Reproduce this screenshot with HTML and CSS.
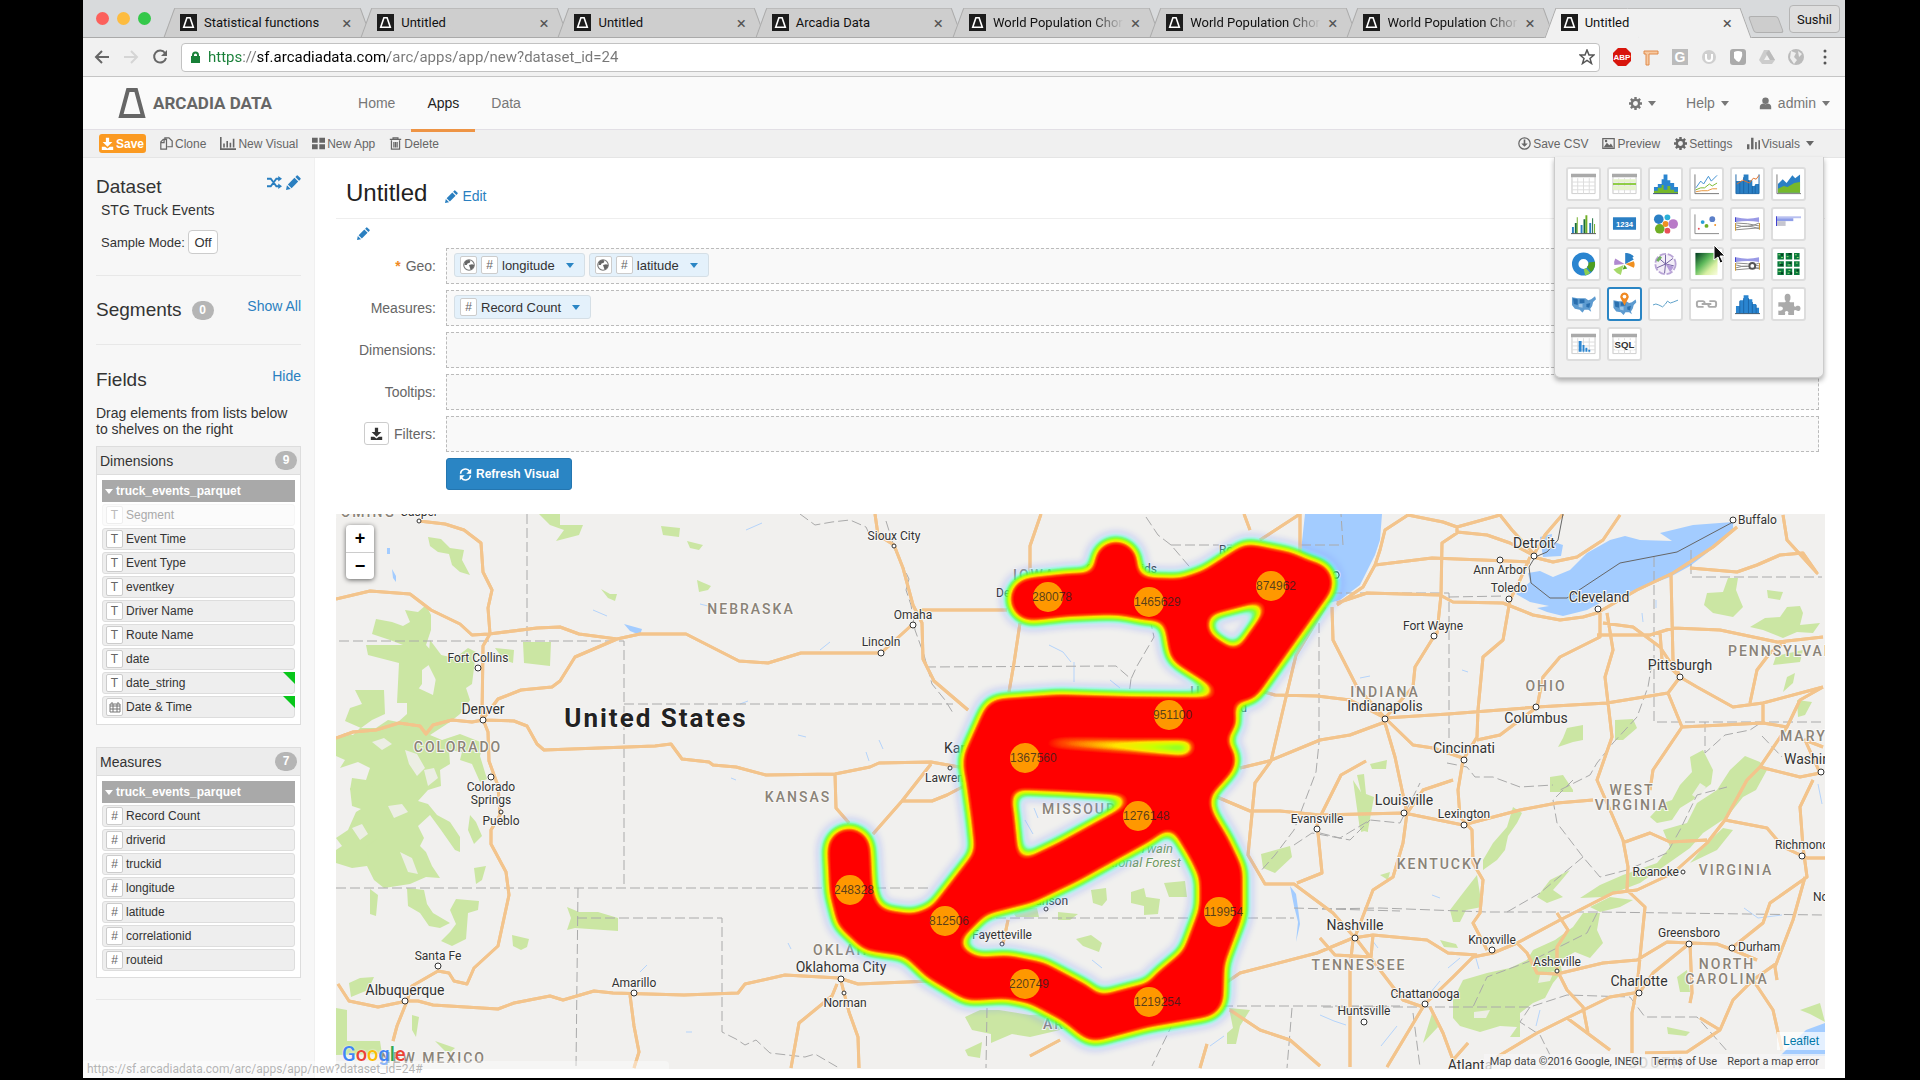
FILE: index.html
```html
<!DOCTYPE html>
<html lang="en">
<head>
    <meta charset="UTF-8">
    <meta name="viewport" content="width=device-width, initial-scale=1.0">
    <title>Untitled - Arcadia Data</title>
    <link rel="stylesheet" href="styles.css">
</head>
<body>
<!-- Shared icons -->
<svg class="sprite" aria-hidden="true">
    <symbol id="favicon" viewBox="0 0 16 16"><rect width="16" height="16" fill="#1c1c1c"/><path d="M6.5 3.5h3l3 9h-9z" fill="none" stroke="#fff" stroke-width="1.5"/></symbol>
    <symbol id="pencil" viewBox="0 0 16 16"><path d="M0 16l1-5 4 4zM2 10l7-7 4 4-7 7zM10 2l1.500-1.500q.5-.5 1 0l3 3q.5.5 0 1L14 6z"/></symbol>
    <symbol id="shuffle" viewBox="0 0 16 16"><path d="M0 4h4l6 8h3M0 12h4l6-8h3" fill="none" stroke="currentColor" stroke-width="2"/><path d="M12 1l4 3-4 3zM12 9l4 3-4 3z"/></symbol>
    <symbol id="download" viewBox="0 0 16 16"><path d="M6 1h4v5h4l-6 6-6-6h4zM1 12h4l3 2 3-2h4v4H1z"/></symbol>
    <symbol id="cog" viewBox="0 0 16 16"><circle cx="8" cy="8" r="4.500" fill="none" stroke="currentColor" stroke-width="3"/><path d="M8 0v3M8 13v3M0 8h3M13 8h3M2.300 2.300l2 2M11.700 11.700l2 2M2.300 13.700l2-2M11.700 4.300l2-2" stroke="currentColor" stroke-width="3"/></symbol>
    <symbol id="globe" viewBox="0 0 16 16"><circle cx="8" cy="8" r="7" fill="#fff" stroke="#777" stroke-width="1.500"/><path d="M3 3q4-3 7-1l-1 3-3 1-1 2-3 0zM8 8l4-1 3 1q-1 5-5 6l-1-3z" fill="#666"/></symbol>
    <symbol id="user" viewBox="0 0 16 16"><circle cx="8" cy="4.500" r="4"/><path d="M1 15v-3q0-3 4-4 3 2 6 0 4 1 4 4v3z"/></symbol>
    <symbol id="grid-table" viewBox="0 0 26 22"><path d="M1 1h24v20H1z" fill="#fff" stroke="#ccc"/><path d="M1 6v15M7 5v16M13 5v16M19 5v16M1 9h24M1 13h24M1 17h24" stroke="#ddd"/><path d="M0 0h26v4H0z" fill="#aaa"/></symbol>
    <symbol id="usa" viewBox="0 0 26 18"><path d="M1 2l6 1 8 0 3 2 3-1 4-3 1 3-3 3-1 4-2 3 1 3-3-2-4 0-2 3-3-3-5-1-3-4z" fill="#5d9bd0"/><path d="M2 3l5 1v6l-4-1zM9 4h5v4H9zM16 9l4-1-1 5-3-1z" fill="#2a6fae"/><path d="M8 9h4v4l-4-1z" fill="#9fc6e6"/></symbol>
    <symbol id="sankey" viewBox="0 0 26 16"><path d="M1 1q12 3 24 0v5q-12-2-24 0z" fill="#9a9ae6"/><path d="M1 7q12 0 24 3M1 9q12 4 24-2M1 12q12-4 24 1M1 14q12-1 24-2" fill="none" stroke="#888"/><path d="M0 1h1v5H0z" fill="#3a3ad0"/><path d="M0 7h1v8H0zM25 7h1v7h-1z" fill="#c93"/></symbol>
</svg>

<div class="window">
    <div class="tab-strip">
        <div class="lights"><i class="red"></i><i class="yellow"></i><i class="green"></i></div>
        <ul class="tabs">
            <li class="tab"><svg class="favicon"><use href="#favicon"/></svg><a href="#">Statistical functions</a><button aria-label="Close tab">×</button></li>
            <li class="tab"><svg class="favicon"><use href="#favicon"/></svg><a href="#">Untitled</a><button aria-label="Close tab">×</button></li>
            <li class="tab"><svg class="favicon"><use href="#favicon"/></svg><a href="#">Untitled</a><button aria-label="Close tab">×</button></li>
            <li class="tab"><svg class="favicon"><use href="#favicon"/></svg><a href="#">Arcadia Data</a><button aria-label="Close tab">×</button></li>
            <li class="tab long"><svg class="favicon"><use href="#favicon"/></svg><a href="#">World Population Chor</a><button aria-label="Close tab">×</button></li>
            <li class="tab long"><svg class="favicon"><use href="#favicon"/></svg><a href="#">World Population Chor</a><button aria-label="Close tab">×</button></li>
            <li class="tab long"><svg class="favicon"><use href="#favicon"/></svg><a href="#">World Population Chor</a><button aria-label="Close tab">×</button></li>
            <li class="tab active"><svg class="favicon"><use href="#favicon"/></svg><a href="#">Untitled</a><button aria-label="Close tab">×</button></li>
        </ul>
        <button class="new-tab" aria-label="New tab"></button>
        <button class="profile">Sushil</button>
    </div>

    <div class="toolbar">
        <button aria-label="Back"><svg width="16" height="16" viewBox="0 0 16 16"><path d="M15 8H2M8 2L2 8l6 6" fill="none" stroke="#666" stroke-width="2"/></svg></button>
        <button aria-label="Forward"><svg width="16" height="16" viewBox="0 0 16 16"><path d="M1 8h13M8 2l6 6-6 6" fill="none" stroke="#d5d5d5" stroke-width="2"/></svg></button>
        <button aria-label="Reload"><svg width="16" height="16" viewBox="0 0 16 16"><path d="M13 4a6 6 0 1 0 1 5" fill="none" stroke="#666" stroke-width="2"/><path d="M15 1v6H9z" fill="#666"/></svg></button>
        <label class="address">
            <svg width="11" height="13" viewBox="0 0 11 13"><path d="M3 6V4a2.500 2.500 0 0 1 5 0v2" fill="none" stroke="#188038" stroke-width="2"/><path d="M1 5h9v7H1z" fill="#188038"/></svg>
            <input type="text" class="url" aria-label="Address" value="https://sf.arcadiadata.com/arc/apps/app/new?dataset_id=24">
            <svg width="16" height="16" viewBox="0 0 16 16"><path d="M8 1l2 5h5l-4 3.500 1.500 5L8 11.500l-4.500 3 1.500-5L1 6h5z" fill="none" stroke="#555" stroke-width="1.500"/></svg>
        </label>
        <div class="extensions">
            <svg width="18" height="18" viewBox="0 0 18 18"><path d="M5 0h8l5 5v8l-5 5H5l-5-5V5z" fill="#d8150c"/><text x="9" y="12" class="abp">ABP</text></svg>
            <svg width="18" height="18" viewBox="0 0 18 18"><path d="M2 3h14v3H7v11H4V6H2z" fill="#f7c9a0" stroke="#e08a4a"/></svg>
            <svg width="18" height="18" viewBox="0 0 18 18"><path d="M1 1h16v16H1z" fill="#bbb"/><text x="9" y="14" class="ext-g">G</text></svg>
            <svg width="18" height="18" viewBox="0 0 18 18"><circle cx="9" cy="9" r="7" fill="#cfcfcf"/><path d="M6 6v4q0 3 3 3t3-3V6" fill="none" stroke="#fff" stroke-width="2"/></svg>
            <svg width="18" height="18" viewBox="0 0 18 18"><rect x="1" y="1" width="16" height="16" rx="3" fill="#aaa"/><path d="M5 4q4-2 8 0 1 5-3 10-3-1-5-4z" fill="#fff"/></svg>
            <svg width="18" height="18" viewBox="0 0 18 18"><path d="M6 2h5l6 10-3 4H4l-3-4z" fill="#ccc"/><path d="M9 7l3 5H6z" fill="#f1f1f1"/><path d="M11 2l6 10h-5L8 5z" fill="#bbb"/></svg>
            <svg width="18" height="18" viewBox="0 0 18 18"><circle cx="9" cy="9" r="8" fill="#bbb"/><path d="M4 3l5 2-2 4 3 3-3 4-4-6zM11 3l4 3-3 3z" fill="#eee"/></svg>
            <svg width="18" height="18" viewBox="0 0 18 18"><circle cx="9" cy="3" r="1.500" fill="#555"/><circle cx="9" cy="9" r="1.500" fill="#555"/><circle cx="9" cy="15" r="1.500" fill="#555"/></svg>
        </div>
    </div>

    <header class="header">
        <a href="#" class="brand">
            <svg width="28" height="30" viewBox="0 0 28 30"><path d="M10 2h8l7 26H3z" fill="none" stroke="#666" stroke-width="4"/></svg>
            <span>ARCADIA DATA</span>
        </a>
        <nav class="nav">
            <a href="#">Home</a>
            <a href="#" class="current">Apps</a>
            <a href="#">Data</a>
        </nav>
        <nav class="nav-right">
            <button aria-label="Site settings"><svg class="icon"><use href="#cog"/></svg><span class="caret"></span></button>
            <button>Help <span class="caret"></span></button>
            <button><svg class="icon"><use href="#user"/></svg>admin <span class="caret"></span></button>
        </nav>
    </header>

    <div class="actions">
        <button class="save"><svg class="icon"><use href="#download"/></svg>Save</button>
        <button><svg class="icon" viewBox="0 0 16 16"><path d="M6 4V1h5l4 4v7H9M1 6l3-3h4v12H1zM1 7h4V3" fill="none" stroke="currentColor" stroke-width="1.500"/></svg>Clone</button>
        <button><svg class="icon wide" viewBox="0 0 20 16"><path d="M1 0v15h19" fill="none" stroke="currentColor" stroke-width="2"/><path d="M4 8h2v5H4zM8 5h2v8H8zM12 7h2v6h-2zM16 2h2v11h-2z"/></svg>New Visual</button>
        <button><svg class="icon" viewBox="0 0 16 16"><path d="M0 1h7v6H0zM9 1h7v6H9zM0 9h7v6H0zM9 9h7v6H9z"/></svg>New App</button>
        <button class="push"><svg class="icon" viewBox="0 0 16 16"><path d="M1 3h14M5 3V1h6v2M3 4v11h10V4M6 6v7M8 6v7M10 6v7" fill="none" stroke="currentColor" stroke-width="1.500"/></svg>Delete</button>
        <button><svg class="icon" viewBox="0 0 16 16"><circle cx="8" cy="8" r="7" fill="none" stroke="currentColor" stroke-width="1.500"/><path d="M7 3h2v5h3l-4 4-4-4h3z"/></svg>Save CSV</button>
        <button><svg class="icon" viewBox="0 0 16 16"><path d="M1 2h14v12H1z" fill="none" stroke="currentColor" stroke-width="1.500"/><path d="M2 13l4-6 3 3 2-2 3 5z"/><circle cx="5" cy="5" r="1.500"/></svg>Preview</button>
        <button><svg class="icon"><use href="#cog"/></svg>Settings</button>
        <div class="visuals">
            <button><svg class="icon" viewBox="0 0 16 16"><path d="M0 9h3v6H0zM5 1h3v14H5zM10 6h2v9h-2zM14 4h2v11h-2z"/></svg>Visuals <span class="caret"></span></button>
            <div class="visual-menu">
                <button aria-label="Table"><svg viewBox="0 0 26 22"><use href="#grid-table"/></svg></button>
                <button aria-label="Cross tab"><svg viewBox="0 0 26 22"><use href="#grid-table"/><path d="M1 6h24v3H1zM1 13h24v4H1z" fill="#e6f3cc"/><path d="M1 10h24v2H1z" fill="#8ccb3f"/></svg></button>
                <button aria-label="Bars"><svg viewBox="0 0 26 22"><path d="M1 14h4v-3h4V6h2V1h4v6h3v3h4v4h4v7H1z" fill="#2a85d0"/><path d="M1 21v-3h4v-3h4v-3h2v5h4v-4h3v4h4v2h4v2z" fill="#76b82a"/><path d="M0 21h26" stroke="#457"/></svg></button>
                <button aria-label="Lines"><svg viewBox="0 0 26 22"><path d="M1 1v20h25" fill="none" stroke="#777"/><path d="M2 15l5-7 3 3 5-8 3 5 6-6" fill="none" stroke="#3c8fd0"/><path d="M2 17l5-2 4 0 5-4 3 2 5-3" fill="none" stroke="#7ab82e"/><path d="M2 19l6-1 6 0 5-2 5 0" fill="none" stroke="#e8953a"/></svg></button>
                <button aria-label="Combo"><svg viewBox="0 0 26 22"><path d="M1 8h8V1h5v6h4v6h3v-2h4v10H1z" fill="#2a7fc4"/><path d="M1 1v20h24V1M5 8v13M9 4v17M14 7v14M18 13v8M21 12v9" fill="none" stroke="#1c66a8" /><path d="M2 11l6-4 7 3 4-5 3 1 3-4" fill="none" stroke="#e2712a"/></svg></button>
                <button aria-label="Areas"><svg viewBox="0 0 26 22"><path d="M1 1v20h25" fill="none" stroke="#777"/><path d="M2 20v-9l5-5 4 4 6-8 3 3 5-4v19z" fill="#2a7fc4"/><path d="M2 20v-4l6-3 4 1 7-4 6-1v11z" fill="#76b82a"/></svg></button>

                <button aria-label="Grouped bars"><svg viewBox="0 0 26 22"><path d="M1 14h2v7H1zM10 12h2v9h-2zM19 10h2v11h-2z" fill="#2a7fc4"/><path d="M4 10h2v11H4zM13 6h2v15h-2zM22 5h1v16h-1z" fill="#176c3a"/><path d="M6 4h1v17H6zM15 2h2v19h-2zM24 11h1v10h-1z" fill="#6fae25"/><path d="M0 21h26" stroke="#555"/></svg></button>
                <button aria-label="KPI"><svg viewBox="0 0 26 22"><path d="M1 4h24v13H1z" fill="#2a7fc4"/><text x="13" y="14" class="kpi">1234</text></svg></button>
                <button aria-label="Packed bubbles"><svg viewBox="0 0 26 22"><circle cx="6" cy="6" r="5" fill="#2a7fc4"/><circle cx="15" cy="4" r="3" fill="#2ab0d8"/><circle cx="7" cy="16" r="5" fill="#6fae25"/><circle cx="13" cy="11" r="3" fill="#f09020"/><circle cx="21" cy="11" r="5" fill="#b97ac8"/><circle cx="15" cy="18" r="3" fill="#e8505a"/></svg></button>
                <button aria-label="Scatter"><svg viewBox="0 0 26 22"><path d="M1 1v20h25" fill="none" stroke="#888"/><circle cx="9" cy="9" r="2" fill="#2a9fd8"/><circle cx="19" cy="6" r="3" fill="#5b7fc8"/><circle cx="13" cy="13" r="2" fill="#6fae25"/><circle cx="22" cy="12" r="1" fill="#f09020"/><circle cx="5" cy="16" r="1" fill="#e8505a"/></svg></button>
                <button aria-label="Flow"><svg viewBox="0 0 26 18"><use href="#sankey"/></svg></button>
                <button aria-label="Funnel"><svg viewBox="0 0 26 18"><path d="M1 1h25v2H1z" fill="#b8c0f0"/><path d="M1 3h17v3H1z" fill="#8f9ee8"/><path d="M1 6h9v5H1z" fill="#c6c6d0"/><path d="M0 1h1v10H0z" fill="#3a3ad0"/></svg></button>

                <button aria-label="Donut"><svg viewBox="0 0 26 26"><circle cx="13" cy="13" r="9" fill="none" stroke="#2a85d0" stroke-width="7"/><path d="M22 11a9 9 0 0 1-3 8" fill="none" stroke="#4d9e20" stroke-width="7"/><path d="M18 20a9 9 0 0 1-4 2" fill="none" stroke="#8ccf50" stroke-width="7"/></svg></button>
                <button aria-label="Radial"><svg viewBox="0 0 26 26"><path d="M14 13V1q6 0 9 4z" fill="#2a7fc4"/><path d="M14 13V1q4 0 9 7z" fill="#2a7fc4"/><path d="M14 13l9-3q2 4 0 7z" fill="#f09020"/><path d="M13 13L3 7q-2 4-1 7z" fill="#b08ad0"/><path d="M12 14L1 19q4 5 8 6z" fill="#a6d96a"/><path d="M13 14l-2 5 5-1z" fill="#4d9e20"/></svg></button>
                <button aria-label="Chord"><svg viewBox="0 0 26 26"><circle cx="13" cy="13" r="11" fill="#f3eef8" stroke="#b9a5d6" stroke-width="2" stroke-dasharray="7 2"/><path d="M13 13L5 6M13 13V3M13 13l8-6M13 13L4 17M13 13l-1 10M13 13l9 2" stroke="#6b5a9c" stroke-width="1"/><path d="M13 13l9 3-4 6z" fill="#b39ad8"/><path d="M4 10l4-5" stroke="#6fae60" stroke-width="3"/></svg></button>
                <button aria-label="Heatmap"><svg viewBox="0 0 26 26"><defs><linearGradient id="hm" x1="0" y1="0" x2="1" y2="1"><stop offset="0" stop-color="#003a20"/><stop offset=".4" stop-color="#5cb85a"/><stop offset=".7" stop-color="#d9f0a3"/><stop offset="1" stop-color="#fafde0"/></linearGradient></defs><path d="M1 1h24v24H1z" fill="url(#hm)"/></svg></button>
                <button aria-label="Flow editor"><svg viewBox="0 0 26 18"><use href="#sankey"/><circle cx="18" cy="11" r="3" fill="#fff" stroke="#555" stroke-width="2"/></svg></button>
                <button aria-label="Calendar"><svg viewBox="0 0 26 26"><path d="M1 1h7v7H1zM10 1h7v7h-7zM19 1h6v7h-6zM1 10h7v6H1zM10 10h7v6h-7zM19 10h6v6h-6zM1 18h7v7H1zM10 18h7v7h-7zM19 18h6v7h-6z" fill="#0a7a3c"/><path d="M2 3h2M5 6h2M11 5h2M20 3h2M22 6h2M3 12h2M12 14h3M21 12h2M2 21h3M13 20h2M12 23h2M21 22h2" stroke="#9fe07a" stroke-width="1"/><path d="M5 3h2M13 2h3M4 14h3M14 12h2M5 23h2M15 23h2M22 20h2" stroke="#053a1c" stroke-width="2"/></svg></button>

                <button aria-label="Choropleth map"><svg viewBox="0 0 26 18"><use href="#usa"/></svg></button>
                <button aria-label="Interactive map" class="selected"><svg viewBox="0 0 26 26"><use href="#usa" y="7" width="26" height="18"/><path d="M13 15l-4-8a4.500 4.500 0 1 1 8 0z" fill="#f08a24"/><circle cx="13" cy="5" r="2" fill="#fff"/></svg></button>
                <button aria-label="Sparkline"><svg viewBox="0 0 26 18"><path d="M0 10l3-1 3 1 4 2 3-3 2-3 3 2 3-1 5-2" fill="none" stroke="#5a9ec8" stroke-width="1"/></svg></button>
                <button aria-label="External link"><svg viewBox="0 0 26 18"><path d="M10 12H5q-2 0-2-2V8q0-2 2-2h4q2 0 2 2M16 6h5q2 0 2 2v2q0 2-2 2h-4q-2 0-2-2M8 9h10" fill="none" stroke="#aaa" stroke-width="2"/></svg></button>
                <button aria-label="Histogram"><svg viewBox="0 0 26 22"><path d="M1 13h4V7h4V2h5v4h4v5h4v4h3v6H1z" fill="#2a85d0"/><path d="M0 21h26" stroke="#456"/><path d="M5 8v13M9 5v16M14 5v16M18 9v12M22 12v9" stroke="#1c66a8"/></svg></button>
                <button aria-label="Extension"><svg viewBox="0 0 26 26"><path d="M2 11h7q2 0 0-3-1-6 3-6t3 6q-2 3 0 3h4v4q1 2 3 0 4-1 4 3t-4 2q-2-1-3 0v5h-6q-1-1 0-3-2-3-4 0 1 2 0 3H2v-5q5 1 5-2T2 16z" fill="#aaa"/></svg></button>

                <button aria-label="Table histogram"><svg viewBox="0 0 26 22"><use href="#grid-table"/><path d="M8 8h3v11H8zM12 12h2v7h-2zM15 15h2v4h-2zM18 17h2v2h-2z" fill="#2a85d0"/></svg></button>
                <button aria-label="SQL"><svg viewBox="0 0 26 22"><use href="#grid-table"/><path d="M3 7h20v10H3z" fill="#fff"/><text x="13" y="15" class="sql">SQL</text></svg></button>
                <svg class="cursor" width="14" height="20" viewBox="0 0 14 20"><path d="M1 1v15l4-3 2 6 3-1-3-6h5z" fill="#111" stroke="#fff"/></svg>
            </div>
        </div>
    </div>

    <div class="page">
        <aside class="sidebar">
            <section class="block dataset">
                <div class="row">
                    <h3>Dataset</h3>
                    <div class="tools">
                        <a href="#" aria-label="Switch dataset"><svg class="icon"><use href="#shuffle"/></svg></a>
                        <a href="#" aria-label="Edit dataset"><svg class="icon"><use href="#pencil"/></svg></a>
                    </div>
                </div>
                <p class="dataset-name">STG Truck Events</p>
                <p class="sample">Sample Mode: <button>Off</button></p>
            </section>
            <section class="block segments">
                <div class="row">
                    <h3>Segments <span class="badge">0</span></h3>
                    <a href="#">Show All</a>
                </div>
            </section>
            <section class="block fields">
                <div class="row">
                    <h3>Fields</h3>
                    <a href="#">Hide</a>
                </div>
                <p class="hint">Drag elements from lists below to shelves on the right</p>
                <div class="panel">
                    <h4>Dimensions <span class="badge">9</span></h4>
                    <ul>
                        <li class="group"><span class="caret"></span>truck_events_parquet</li>
                        <li class="muted"><i>T</i>Segment</li>
                        <li><i>T</i>Event Time</li>
                        <li><i>T</i>Event Type</li>
                        <li><i>T</i>eventkey</li>
                        <li><i>T</i>Driver Name</li>
                        <li><i>T</i>Route Name</li>
                        <li><i>T</i>date</li>
                        <li class="calculated"><i>T</i>date_string</li>
                        <li class="calculated"><i><svg width="12" height="12" viewBox="0 0 12 12"><path d="M1 3h10v8H1zM1 5h10M1 8h10M4 3v8M8 3v8M3 1v2M9 1v2" fill="none" stroke="#777"/></svg></i>Date &amp; Time</li>
                    </ul>
                </div>
                <div class="panel">
                    <h4>Measures <span class="badge">7</span></h4>
                    <ul>
                        <li class="group"><span class="caret"></span>truck_events_parquet</li>
                        <li><i>#</i>Record Count</li>
                        <li><i>#</i>driverid</li>
                        <li><i>#</i>truckid</li>
                        <li><i>#</i>longitude</li>
                        <li><i>#</i>latitude</li>
                        <li><i>#</i>correlationid</li>
                        <li><i>#</i>routeid</li>
                    </ul>
                </div>
            </section>
        </aside>

        <main class="main">
            <div class="title">
                <h1>Untitled</h1>
                <a href="#"><svg class="icon"><use href="#pencil"/></svg>Edit</a>
            </div>
            <div class="shelves">
                <a href="#" class="subtitle-edit" aria-label="Edit subtitle"><svg class="icon"><use href="#pencil"/></svg></a>
                <div class="shelf">
                    <span class="name"><b>*</b> Geo:</span>
                    <div class="drop">
                        <button class="chip"><i><svg width="12" height="12"><use href="#globe"/></svg></i><i>#</i><span>longitude</span><span class="caret"></span></button>
                        <button class="chip"><i><svg width="12" height="12"><use href="#globe"/></svg></i><i>#</i><span>latitude</span><span class="caret"></span></button>
                    </div>
                </div>
                <div class="shelf">
                    <span class="name">Measures:</span>
                    <div class="drop">
                        <button class="chip"><i>#</i><span>Record Count</span><span class="caret"></span></button>
                    </div>
                </div>
                <div class="shelf"><span class="name">Dimensions:</span><div class="drop"></div></div>
                <div class="shelf"><span class="name">Tooltips:</span><div class="drop"></div></div>
                <div class="shelf">
                    <span class="name"><button class="import" aria-label="Import filters"><svg class="icon"><use href="#download"/></svg></button>Filters:</span>
                    <div class="drop"></div>
                </div>
                <button class="refresh"><svg class="icon" viewBox="0 0 16 16"><path d="M2 7a6 6 0 0 1 11-3M14 9a6 6 0 0 1-11 3" fill="none" stroke="currentColor" stroke-width="2"/><path d="M15 1v6H9zM1 15V9h6z"/></svg>Refresh Visual</button>
            </div>

            <div class="map">
                <svg class="tiles" viewBox="336 514 1489 555">
                    <defs>
                        <!-- heat ramp: blur the track, then colour it by its alpha -->
                        <filter id="heat" filterUnits="userSpaceOnUse" x="336" y="514" width="1489" height="555" color-interpolation-filters="sRGB">
                            <feGaussianBlur stdDeviation="6" result="blur"/>
                            <feColorMatrix values="0 0 0 1 0  0 0 0 1 0  0 0 0 1 0  0 0 0 0 1"/>
                            <feComponentTransfer result="ramp">
                                <feFuncR type="table" tableValues=".4 .5 .5 .3 .3 .5 .8 1 1 1 1"/>
                                <feFuncG type="table" tableValues=".5 .6 .8 1 1 1 1 .9 .3 0 0"/>
                                <feFuncB type="table" tableValues="1 1 1 .8 .4 .1 0 0 0 0 0"/>
                            </feComponentTransfer>
                            <feComponentTransfer in="blur" result="mask">
                                <feFuncA type="table" tableValues="0 .18 .3 .5 .75 .9 1 1 1 1 1"/>
                            </feComponentTransfer>
                            <feComposite in="ramp" in2="mask" operator="in"/>
                        </filter>
                    </defs>
                    <rect x="336" y="514" width="1489" height="555" fill="#f1f0ee"/>
                    <g class="forest">
                        <path d="M336 739L345 733L353 735L360 728L376 728L388 720L398 722L407 714V692L418 688L433 695L436 678L432 668L441 655L455 658L468 648L476 652L472 684L466 688L470 700L460 714L450 722L430 735L442 740L460 734L483 743L480 756L487 779L480 782L472 764L460 760L462 752L449 750L450 764L440 770L441 786L428 790L418 801L428 804L437 815L450 822L460 837L460 852L455 850L441 830L430 815L418 826L424 838L420 846L426 852L432 866L440 878L426 877L410 884L384 888L374 880L367 866L352 868L336 863V850L342 846L336 838L348 830L356 812L366 806L358 792L350 790L352 778L366 780L370 768L358 762L340 768L345 760L336 756Z"/>
                        <path d="M405 610L418 612L426 605L431 615V630L426 645L435 655L430 664L422 670V684L408 703H397L399 663L368 655L366 645H403L390 640L372 634L376 619L392 622L403 626L410 622Z"/>
                        <path d="M355 690H384L385 714L372 720L361 728L345 721L350 708L362 704Z"/>
                        <path d="M430 640L445 660L456 668L452 690L462 700L440 704L436 680L428 664ZM350 788L372 786L382 800L370 812L352 806ZM470 815L476 822L482 836L474 844L468 830ZM474 868L486 866L482 880L476 884Z"/>
                        <path d="M428 537L441 539L450 548L464 550L462 560L470 575L460 572L452 565L449 554L438 552L430 546Z"/>
                        <path d="M523 642H551L550 666L524 663ZM495 648L514 650L513 663L504 660ZM539 514H560V525L583 525L579 535L556 541L564 530L550 525Z"/>
                        <path d="M661 526L680 528L679 537L663 535ZM687 541L703 545L699 550L690 548ZM697 580L711 586L708 590L699 592ZM601 589L610 594L617 594L615 601L608 598Z"/>
                        <path d="M567 907L579 912L598 912L618 918V931L575 928L567 930L571 918Z"/>
                        <path d="M407 888L424 890L427 904L433 913L450 923L440 928L429 926L420 913L408 906ZM456 899L479 901L478 910L468 913L466 939L452 946L441 941L450 932L456 924L450 910ZM370 889L378 895L376 916L370 914ZM512 935L529 939L527 947L521 950L513 946ZM349 983L360 978L374 977L368 990L351 997ZM336 1008L347 1010V1041H380L382 1054L336 1055ZM412 1015L419 1017L416 1037L412 1030ZM435 1041L455 1048L448 1054ZM366 847L378 838L386 852L380 870L370 864Z"/>
                        <path d="M1014 914L1024 908L1037 908L1039 917H1016ZM1091 890L1106 888L1107 900L1102 906L1093 903ZM1131 892L1144 888L1146 897L1160 899L1158 914L1144 915V906L1131 903ZM1164 883L1185 881L1187 897H1169ZM1076 939L1091 935L1102 943L1099 952L1083 946ZM1058 912L1078 914L1070 920L1058 920Z"/>
                        <path d="M965 1017L980 1010L999 1010L1030 1015L1050 1014L1064 1019L1060 1030L1030 1037L1012 1034L991 1043V1034L972 1030ZM965 1050L982 1042L980 1058L968 1056ZM1229 1008L1250 1010L1240 1026L1236 1044L1227 1044V1033L1233 1028ZM1261 854L1290 846L1292 857L1275 873L1263 868ZM1357 775L1364 774L1366 794L1374 797L1368 830L1361 832L1363 801ZM1370 764L1387 760L1386 769H1372Z"/>
                        <path d="M1707 593L1723 592L1728 578H1738L1736 590L1740 600L1743 607L1733 617L1713 613L1704 605ZM1767 590L1783 592L1780 600L1768 598ZM1750 627L1765 618L1780 617L1787 607L1800 606L1803 613L1800 625L1820 623L1813 633L1797 632L1783 638L1763 630ZM1776 656L1803 650L1800 662L1773 665ZM1787 677L1795 673L1793 683L1783 692ZM1797 700L1812 702L1805 715L1798 717Z"/>
                        <path d="M1615 720L1633 719L1637 728L1623 740H1615ZM1567 728L1583 725V740L1573 742L1558 747L1563 738ZM1550 777L1563 775L1573 790V792H1550Z"/>
                        <path d="M1690 757L1703 750L1713 770L1711 784L1703 790L1693 800L1680 808L1672 820L1657 823L1650 817L1663 803L1672 800L1680 785L1692 772ZM1717 790L1730 770L1745 756L1760 762L1767 770L1756 790L1743 797L1727 817L1703 833L1690 848L1673 860L1640 883L1603 897L1580 898L1600 885L1623 875L1657 863L1670 847L1663 830L1687 823L1697 803ZM1723 828L1733 830L1717 850L1690 863L1707 843Z"/>
                        <path d="M1513 807L1522 813L1517 823L1508 836L1505 850L1497 860L1483 870V860L1493 843L1507 827ZM1477 875L1482 907L1466 910L1460 922L1453 922L1450 910L1463 893ZM1537 897L1550 880L1570 870L1560 882L1553 890L1563 897L1547 903ZM1590 907L1610 897L1633 900L1620 907L1600 912Z"/>
                        <path d="M1487 973L1510 968L1527 960L1533 950L1555 940L1573 927L1583 913H1600L1597 930L1603 943L1590 958L1575 952L1560 960L1562 972L1553 983L1545 998L1533 1003L1520 1013V1037H1510L1517 1027L1500 1026L1480 1032L1460 1026L1453 1018V1000L1463 980ZM1433 1010L1438 1027L1423 1043ZM1677 977L1687 970L1690 992H1680ZM1667 1027L1690 1032L1686 1036L1668 1034ZM1800 1010L1820 1003L1825 1022L1810 1014ZM1440 940L1456 944L1458 948L1444 947ZM1380 875L1390 872L1388 880ZM1353 780L1368 803L1368 832L1360 830Z"/>
                    </g>
                    <path class="clearing" d="M405 750l12 4 8 14-8 8-8-12zM424 770l10-2 4 10-10 8zM388 806l14-2 6 8-14 6zM352 828l10-4 6 10-8 6zM400 852l12 6 6 16-10-2zM372 742l12-4 8 6-10 6zM1540 975l14-4-4 10-12 2zM1474 1012l16-2-4 8-12 0zM1692 795l8-12 6 4-8 12z"/>
                    <g class="water">
                        <path d="M1305 514H1382L1380 540L1375 555L1360 585L1340 600L1325 604L1300 560ZM1528 573L1540 571L1553 577L1570 570L1587 553L1610 540L1625 536L1640 540L1672 541L1660 533L1693 525L1733 522V530L1707 553L1690 566L1670 577L1630 592L1600 603L1587 610L1563 616L1547 612L1537 608L1549 606L1530 602L1516 594L1530 582ZM1540 537L1552 534L1551 541L1563 545L1561 556L1543 557ZM1825 1023L1806 1030L1788 1048L1780 1056H1825Z"/>
                        <path d="M624 624L642 629L640 635L630 631ZM387 548h3v6h-3zM392 569l4 7v6l-3-4zM1290 886l6 8 2 14 2 16-4 18 2-20-4-16z"/>
                    </g>
                    <path class="streams" d="M746 530l16-7M700 604l12 3M820 650l10-8M798 735l8 2M740 704l8-3M879 740l4 9M866 752l3 9M788 943l3 6M640 972l7-7M686 1032l6 0M731 778l5 2M593 610l14 6M1049 645l14 7 8 10M1074 662v20M1110 680l10 8M1085 730l8 10M1025 820l8 14M1034 808l4 10M1092 960l10 8M1220 900l0-8M1210 1046l14-10M1381 1046l16-20M1430 993l10-12M1448 968l12-10M1432 895l8 3M1462 670l6 2M1360 678l10-2M1643 622l-1-9M1656 600v8M1744 908l14 10 24-3M1818 784l4 20M1540 1010l-4 16M1320 1015l14 6 12 4M1372 940l6 8M1475 955l4 14"/>
                    <g class="border">
                        <path d="M527 514V641M339 641H624V888M624 704H953M336 888H822M876 888H930M578 888L576 1068M577 918H722V1032L736 1039L745 1045L756 1040L770 1053L805 1057L815 1054L839 1068"/>
                        <path d="M800 514L815 525L832 522L850 520L866 527L872 540M886 521L895 550L909 579L906 590L911 605L915 630L924 655L932 684L945 700L953 713M926 667L1116 666L1131 679L1129 695M1150 619L1154 637L1137 666L1131 679M1146 517L1158 535L1171 545L1194 572M1171 545H1232M1301 545H1343L1341 514M1319 623V743L1316 772L1294 830L1275 855L1259 873M968 918H1294M1294 908L1400 911M987 1008L986 1068M1223 1006H1400M1292 1008L1287 1068M1173 1023L1152 1066M1294 845L1312 833L1350 840L1370 820"/>
                        <path d="M1332 593H1449V740M1449 597L1505 596M1654 557V722H1822M1691 550V577H1822M1652 663L1648 687L1637 717L1613 743L1597 763L1590 775L1560 790M1447 763L1467 767L1475 777L1493 777L1520 787L1553 785M1705 722V753L1725 735L1750 730L1762 722M1762 736L1782 757"/>
                        <path d="M1320 833L1340 838L1370 820L1400 823L1420 783M1322 909L1380 908L1487 912L1597 912L1822 915M1573 780L1553 800L1557 823L1583 857L1600 877L1627 870L1667 853L1680 830L1697 795L1727 787M1583 857L1540 893L1507 912M1597 913L1587 933L1533 960L1487 977L1473 1007M1323 1007H1530L1567 995L1630 997L1645 1017H1697L1728 1052M1413 1013L1420 1067M1530 1007L1520 1022L1540 1035L1550 1055"/>
                    </g>
                    <path id="roads" class="road-edge" d="M336 599L370 591L410 594L431 610L460 624L472 635L489 634L537 628L560 627L579 634L617 639L640 634L686 634L739 661L768 663L801 653H881L914 623
                        M419 521L445 524L464 530L481 543L483 572L492 590L488 608L490 634L483 646L482 717L488 732L489 761L498 786L500 815L491 830V844L506 872L509 895L498 946L474 968L467 984L454 981L449 973L438 971L412 986L407 1001L397 1026L393 1041
                        M617 639L575 657L560 681L552 687L521 690L498 699L483 719
                        M336 738L353 732L376 730L399 723L420 726L426 734L433 725L452 720L472 722L483 720L514 721L527 726L537 744L544 750L655 746L671 744L682 759L709 762L713 765L736 767L766 775L835 774L870 767L879 763L931 762L965 768
                        M835 774L836 808L849 823M931 764L902 801L873 834M902 801L932 801L947 795L968 784
                        M338 984L349 1001L378 1007L407 1001L418 1001L433 1005L498 1009L514 1003L550 996L563 1000L594 991L613 993L684 995L738 993L745 984L785 975L839 978L858 984L931 981
                        M630 995L634 1026L639 1052L634 1068M837 984L832 996L799 1023L791 1068M841 981L849 1012L858 1037L859 1068
                        M875 514L878 535L894 545L903 568L913 605L922 623L923 659L934 681L968 710M919 610H1007M1041 514L1030 546V575M1020 623L1014 663L1009 692M1244 514L1250 530M1260 540L1300 514V560
                        M1408 515L1385 530L1380 550L1375 565L1363 587L1337 605M1408 515L1443 522L1457 527V533L1442 543L1441 595L1437 633L1433 638L1415 667L1413 687L1385 718
                        M1375 565L1432 558L1530 562M1457 532L1487 535L1510 543L1533 555M1457 527L1500 515L1512 530L1533 553M1533 557L1553 562L1577 557L1603 540L1620 515M1563 514L1545 535L1533 556
                        M1337 603L1367 593L1440 595L1453 602L1503 603L1533 615L1560 620L1583 617L1597 613L1637 590L1673 573L1713 547L1737 527
                        M1530 557L1520 580L1510 600L1503 640L1483 657L1478 710L1477 737L1463 760L1458 790L1460 817L1472 830L1473 863L1483 880L1480 913L1473 923L1487 950
                        M1332 607L1333 640L1357 687L1385 718L1448 714L1500 710L1537 707L1607 703L1668 693L1680 677M1257 690L1275 695L1317 696L1350 700L1385 718M1385 722L1350 735L1320 740L1269 761L1240 768M1385 718L1413 745L1433 748L1463 758
                        M1385 723L1395 757L1402 790L1407 813L1403 843L1393 877L1373 890L1355 937M1537 707L1500 735L1477 740M1537 707L1543 677L1560 657L1600 637V613M1607 613L1613 650L1605 677L1612 737L1597 780L1607 803L1623 840L1628 867L1627 890L1645 907L1640 957L1637 987L1632 1013V1053
                        M1597 635L1650 635L1673 628L1720 630L1777 642L1823 637M1603 623L1633 627L1660 647L1680 677L1697 687L1733 707L1763 703L1823 687M1671 575L1673 660L1680 677M1660 632L1662 660L1680 677M1690 568L1737 572L1757 565L1780 555L1803 553L1817 573L1787 540L1783 515
                        M1680 677L1668 693L1682 727L1763 723L1787 727M1682 727L1653 770L1650 790M1750 703L1757 670L1770 653L1785 642M1763 703V723M1823 687L1800 700L1787 727L1760 767L1800 777L1820 773L1805 740L1823 747
                        M1760 767L1747 780L1725 820L1707 843L1673 873L1637 890L1613 893L1560 920L1517 943L1493 953L1473 957L1453 977L1425 1004M1725 820L1767 828L1783 847L1807 858L1825 858M1813 780L1800 807L1803 847L1807 877L1770 903L1763 923L1733 947M1805 877L1793 920L1775 967L1777 980M1625 842L1650 833L1670 842L1707 840
                        M1404 813L1463 825L1520 810L1557 803L1593 800M1404 813L1320 815L1280 811L1250 811L1217 797M1408 812L1423 790L1453 780
                        M1221 986L1240 973L1317 953L1353 938L1373 935L1427 940L1448 953L1477 955M1355 938L1333 913L1294 884H1265L1248 855L1255 783L1271 761L1282 714L1296 655L1325 607M1317 823L1322 873L1297 883M1317 823L1341 775L1366 761
                        M1353 940L1350 967V1067M1357 940L1380 970L1403 1000L1423 1007L1387 1067M1430 1007L1443 1033L1453 1060L1468 1043M1230 1010L1260 1030L1290 1040L1320 1066M1320 938L1335 955L1371 957L1373 935
                        M1517 943L1527 953L1537 973L1557 974L1603 963L1637 960L1667 942L1690 943L1717 944L1733 950L1757 960M1557 913L1568 930L1557 947V970L1567 990L1583 1007L1588 1033M1497 1057L1537 1033L1567 1018L1610 997L1640 992L1653 973L1690 943L1692 993L1690 1003M1567 1018L1610 1050M1645 1053L1687 1052L1720 1030L1733 1000L1753 980L1777 963M1753 980L1773 1010L1782 1050M1700 1018L1720 1030
                        M1030 1056L1060 1040M1008 920L1003 944M1207 1044L1200 1068"/>
                    <use href="#roads" class="road-core"/>
                    <path class="coast" d="M1563 514L1558 540L1547 552L1535 557L1529 567L1531 583L1550 598H1567L1620 563L1677 552L1733 522"/>

                    <g class="state">
                        <text class="end" x="396" y="517">WYOMING</text>
                        <text x="751" y="614">NEBRASKA</text>
                        <text x="458" y="752">COLORADO</text>
                        <text x="798" y="802">KANSAS</text>
                        <text class="start" x="813" y="955">OKLAHOMA</text>
                        <text class="end" x="486" y="1063">NEW MEXICO</text>
                        <text class="start" x="1013" y="580">IOWA</text>
                        <text class="start" x="1190" y="697">ILLINOIS</text>
                        <text class="start" x="1042" y="814">MISSOURI</text>
                        <text class="start" x="1043" y="1029">ARKANSAS</text>
                        <text x="1385" y="697">INDIANA</text>
                        <text x="1546" y="691">OHIO</text>
                        <text class="start" x="1728" y="656">PENNSYLVANIA</text>
                        <text class="start" x="1780" y="741">MARYLAND</text>
                        <text x="1632" y="795">WEST</text>
                        <text x="1632" y="810">VIRGINIA</text>
                        <text x="1736" y="875">VIRGINIA</text>
                        <text x="1440" y="869">KENTUCKY</text>
                        <text x="1359" y="970">TENNESSEE</text>
                        <text x="1727" y="969">NORTH</text>
                        <text x="1727" y="984">CAROLINA</text>
                        <text x="1656" y="1068">SOUTH</text>
                    </g>
                    <text class="country" x="656" y="727">United States</text>
                    <g class="park">
                        <text class="end" x="1173" y="853">Mark Twain</text>
                        <text x="1138" y="867">National Forest</text>
                    </g>
                    <g class="town">
                        <text x="419" y="516">Casper</text><circle cx="419" cy="521" r="2"/>
                        <text x="894" y="540">Sioux City</text><circle cx="894" cy="546" r="2"/>
                        <text x="913" y="619">Omaha</text><circle cx="913" cy="625" r="3"/>
                        <text x="881" y="646">Lincoln</text><circle cx="881" cy="653" r="3"/>
                        <text x="478" y="662">Fort Collins</text><circle cx="478" cy="668" r="3"/>
                        <text x="491" y="791">Colorado</text><text x="491" y="804">Springs</text><circle cx="491" cy="777" r="3"/>
                        <text x="501" y="825">Pueblo</text><circle cx="501" cy="812" r="2"/>
                        <text x="438" y="960">Santa Fe</text><circle cx="438" cy="966" r="3"/>
                        <text x="634" y="987">Amarillo</text><circle cx="634" cy="993" r="3"/>
                        <text x="845" y="1007">Norman</text><circle cx="844" cy="993" r="2"/>
                        <text class="start" x="996" y="597">Des Moines</text>
                        <text class="end" x="1157" y="573">Cedar Rapids</text>
                        <text class="start" x="1219" y="554">Rockford</text>
                        <text class="start" x="1262" y="608">Normal</text>
                        <text class="end" x="1247" y="712">Springfield</text>
                        <text class="start" x="925" y="782">Lawrence</text><circle cx="950" cy="768" r="2"/>
                        <text x="1046" y="905">Branson</text><circle cx="1046" cy="909" r="2"/>
                        <text x="1002" y="939">Fayetteville</text><circle cx="1002" cy="944" r="2"/>
                        <text x="1317" y="823">Evansville</text><circle cx="1317" cy="829" r="3"/>
                        <text x="1364" y="1015">Huntsville</text><circle cx="1364" cy="1022" r="3"/>
                        <text x="1425" y="998">Chattanooga</text><circle cx="1425" cy="1004" r="3"/>
                        <text x="1492" y="944">Knoxville</text><circle cx="1492" cy="950" r="3"/>
                        <text x="1557" y="966">Asheville</text><circle cx="1557" cy="971" r="2"/>
                        <text x="1689" y="937">Greensboro</text><circle cx="1689" cy="944" r="3"/>
                        <text class="start" x="1738" y="951">Durham</text><circle cx="1732" cy="948" r="3"/>
                        <text x="1464" y="818">Lexington</text><circle cx="1464" cy="825" r="3"/>
                        <text class="end" x="1679" y="876">Roanoke</text><circle cx="1683" cy="872" r="2"/>
                        <text class="start" x="1775" y="849">Richmond</text><circle cx="1802" cy="856" r="3"/>
                        <text class="start" x="1813" y="901">Norfolk</text>
                        <text x="1500" y="574">Ann Arbor</text><circle cx="1500" cy="560" r="3"/>
                        <text x="1509" y="592">Toledo</text><circle cx="1509" cy="599" r="3"/>
                        <text class="start" x="1738" y="524">Buffalo</text><circle cx="1733" cy="520" r="3"/>
                        <text x="1433" y="630">Fort Wayne</text><circle cx="1434" cy="636" r="3"/>
                    </g>
                    <g class="town city">
                        <text x="483" y="714">Denver</text><circle cx="483" cy="720" r="3"/>
                        <text x="405" y="995">Albuquerque</text><circle cx="405" cy="1001" r="3"/>
                        <text x="841" y="972">Oklahoma City</text><circle cx="841" cy="979" r="3"/>
                        <text class="start" x="944" y="753">Kansas City</text>
                        <text class="end" x="1340" y="579">Chicago</text><circle cx="1336" cy="575" r="3"/>
                        <text x="1534" y="548">Detroit</text><circle cx="1534" cy="556" r="3"/>
                        <text x="1599" y="602">Cleveland</text><circle cx="1598" cy="609" r="3"/>
                        <text x="1680" y="670">Pittsburgh</text><circle cx="1680" cy="677" r="3"/>
                        <text x="1385" y="711">Indianapolis</text><circle cx="1385" cy="719" r="3"/>
                        <text x="1536" y="723">Columbus</text><circle cx="1536" cy="707" r="3"/>
                        <text x="1464" y="753">Cincinnati</text><circle cx="1464" cy="760" r="3"/>
                        <text class="start" x="1784" y="764">Washington</text><circle cx="1821" cy="772" r="3"/>
                        <text x="1404" y="805">Louisville</text><circle cx="1404" cy="813" r="3"/>
                        <text x="1355" y="930">Nashville</text><circle cx="1355" cy="938" r="3"/>
                        <text x="1639" y="986">Charlotte</text><circle cx="1639" cy="993" r="3"/>
                        <text x="1470" y="1070">Atlanta</text>
                    </g>

                    <g class="track" filter="url(#heat)">
                        <path d="M1116 563V594M1032 599L1068 595L1118 593L1149 599L1183 600L1213 590L1250 566L1285 573L1310 584L1242 680L1190 647L1182 600L1271 577L1311 583"/>
                        <path d="M1215 719L1130 718L1060 716L1003 720L985 760L993 819L997 858L945 925"/>
                        <path d="M985 767L1060 770L1130 774L1190 778M1214 760L1187 790"/>
                        <path d="M1184 785L1172 800L1137 824L1106 841L1068 862L1026 882L975 895L945 925"/>
                        <path d="M849 850L851 890L857 914L874 930L915 936L945 925M915 936L940 960L972 979L1007 977L1037 983L1075 1003L1095 1019L1144 1006L1202 996L1203 960L1221 912V873L1209 848L1192 820L1185 785M1170 990L1200 965"/>
                    </g>
                    <g class="marker">
                        <circle cx="1048" cy="597" r="15"/><text x="1032" y="601">280078</text>
                        <circle cx="1149" cy="602" r="15"/><text x="1134" y="606">1465629</text>
                        <circle cx="1271" cy="586" r="15"/><text x="1256" y="590">874962</text>
                        <circle cx="1169" cy="715" r="15"/><text x="1153" y="719">951100</text>
                        <circle cx="1025" cy="758" r="15"/><text x="1010" y="762">1367560</text>
                        <circle cx="1138" cy="816" r="15"/><text x="1123" y="820">1276148</text>
                        <circle cx="850" cy="890" r="15"/><text x="834" y="894">248328</text>
                        <circle cx="945" cy="921" r="15"/><text x="929" y="925">812506</text>
                        <circle cx="1219" cy="912" r="15"/><text x="1204" y="916">119954</text>
                        <circle cx="1025" cy="984" r="15"/><text x="1009" y="988">220749</text>
                        <circle cx="1149" cy="1002" r="15"/><text x="1134" y="1006">1219254</text>
                    </g>
                </svg>
                <div class="zoom">
                    <button aria-label="Zoom in">+</button>
                    <button aria-label="Zoom out">−</button>
                </div>
                <div class="google"><span class="b">G</span><span class="r">o</span><span class="y">o</span><span class="b">g</span><span class="g">l</span><span class="r">e</span></div>
                <div class="credits">
                    <a href="#" class="leaflet">Leaflet</a>
                    <div class="terms"><span>Map data ©2016 Google, INEGI</span><a href="#">Terms of Use</a><a href="#">Report a map error</a></div>
                </div>
            </div>
        </main>
    </div>
    <div class="status">https://sf.arcadiadata.com/arc/apps/app/new?dataset_id=24#</div>
</div>
</body>
</html>
```
FILE: styles.css
```css
* {
    box-sizing: border-box;
}

body {
    margin: 0;
    padding: 0 75px 2px 83px;
    background: #000;
    font-family: "Liberation Sans", Arial, sans-serif;
    font-size: 14px;
    color: #333;
}

h1, h3, h4, p, ul {
    margin: 0;
    padding: 0;
    font-weight: normal;
}

ul {
    list-style: none;
}

a {
    color: #2a7fc0;
    text-decoration: none;
}

button {
    padding: 0;
    border: 0;
    background: none;
    font: inherit;
    color: inherit;
    cursor: pointer;
}

i {
    font-style: normal;
}

svg {
    flex: none;
}

.sprite {
    display: none;
}

.icon {
    width: 13px;
    height: 13px;
    fill: currentColor;
}

.caret {
    display: inline-block;
    border: 4px solid transparent;
    border-top: 5px solid currentColor;
    border-bottom: 0;
}

.window {
    position: relative;
    display: flex;
    flex-direction: column;
    min-height: calc(100vh - 2px);
    background: #fff;
}

/* Browser tabs */
.tab-strip {
    display: flex;
    height: 38px;
    padding-right: 5px;
    background: #d8dadc;
    border-bottom: 1px solid #aaa;
    font-family: Roboto, sans-serif;
}

.lights {
    display: flex;
    gap: 8px;
    padding: 12px 13px 0 13px;
}

.lights i {
    width: 13px;
    height: 13px;
    border-radius: 50%;
}

.lights .red {
    background: #fc605c;
}

.lights .yellow {
    background: #fdbc40;
}

.lights .green {
    background: #34c84a;
}

.tabs {
    display: flex;
    flex: 1;
    padding-top: 8px;
}

.tab {
    position: relative;
    display: flex;
    flex: 1 1 0;
    align-items: center;
    min-width: 0;
    gap: 7px;
    padding: 0 10px 0 16px;
    font-size: 13px;
}

.tab::before,
.tab::after {
    content: "";
    position: absolute;
    top: 0;
    bottom: 0;
    background: #cecece;
    border-top: 1px solid #bbb;
}

.tab::before {
    left: 5px;
    right: 50%;
    border-left: 1px solid #aaa;
    transform: skewX(-20deg);
}

.tab::after {
    left: 45%;
    right: -5px;
    border-right: 1px solid #aaa;
    transform: skewX(20deg);
}

.tab > * {
    position: relative;
    z-index: 1;
}

.tab.active::before,
.tab.active::after {
    bottom: -1px;
    background: #f1f1f1;
}

.tab a {
    flex: 1;
    white-space: nowrap;
    color: #111;
}

.tab.long a {
    mask-image: linear-gradient(to right, #000 75%, transparent);
}

.tab button {
    font-size: 17px;
    color: #555;
}

.favicon {
    width: 17px;
    height: 17px;
}

.new-tab {
    width: 30px;
    height: 17px;
    margin: 16px 8px 0 9px;
    border: 1px solid #b0b0b0;
    border-radius: 3px;
    background: #cdcdcd;
    transform: skewX(20deg);
}

.profile {
    height: 28px;
    margin-top: 5px;
    padding: 0 7px;
    border: 1px solid #b5b5b5;
    border-radius: 4px;
    background: #dedede;
    font-size: 13px;
    color: #111;
}

/* Browser toolbar */
.toolbar {
    display: flex;
    align-items: center;
    gap: 13px;
    height: 39px;
    padding: 0 11px;
    background: #f1f1f1;
    border-bottom: 1px solid #c5c5c5;
}

.toolbar button {
    display: flex;
}

.address {
    display: flex;
    flex: 1;
    align-items: center;
    height: 29px;
    padding: 0 4px 0 8px;
    border: 1px solid #c2c2c2;
    border-radius: 4px;
    background: #fff;
}

.url {
    flex: 1;
    padding: 0 7px;
    border: 0;
    outline: 0;
    font-family: Roboto, sans-serif;
    font-size: 15px;
    color: transparent;
    background: linear-gradient(to right, #188038 41px, #777 41px, #777 56px, #000 56px, #000 187px, #777 187px);
    background-clip: text;
    -webkit-background-clip: text;
}

.extensions {
    display: flex;
    gap: 11px;
}

.abp,
.ext-g,
.kpi,
.sql {
    font-size: 8px;
    font-weight: bold;
    text-anchor: middle;
    fill: #fff;
}

.ext-g {
    font-size: 14px;
}

.sql {
    font-size: 10px;
    fill: #333;
}

/* Application header */
.header {
    display: flex;
    align-items: center;
    height: 53px;
    padding: 0 15px 0 35px;
    background: #fafafa;
    border-bottom: 1px solid #e2dfe5;
    color: #777;
}

.brand {
    display: flex;
    align-items: center;
    gap: 7px;
    margin-right: 70px;
    font-family: Roboto, sans-serif;
    font-size: 17px;
    font-weight: bold;
    color: #666;
}

.nav {
    display: flex;
    flex: 1;
    align-self: stretch;
}

.nav a {
    padding: 18px 16px 0;
    color: #777;
}

.nav .current {
    margin-bottom: -3px;
    border-bottom: 3px solid #ee9445;
    z-index: 1;
    color: #222;
}

.nav-right {
    display: flex;
    gap: 30px;
}

.nav-right button {
    display: flex;
    align-items: center;
    gap: 6px;
}

/* Action bar */
.actions {
    display: flex;
    align-items: center;
    gap: 14px;
    height: 28px;
    padding: 0 31px 0 16px;
    background: #f0f0f0;
    border-bottom: 1px solid #e5e5e5;
    font-size: 12px;
    color: #666;
}

.actions > button,
.visuals > button {
    display: flex;
    align-items: center;
    gap: 2px;
    white-space: nowrap;
}

.actions .save {
    height: 19px;
    padding: 0 2px;
    border-radius: 3px;
    background: #fb9a21;
    color: #fff;
    font-weight: bold;
}

.actions .push {
    margin-right: auto;
}

.icon.wide {
    width: 16px;
}

.visuals {
    position: relative;
}

.visuals .caret {
    margin-left: 4px;
}

.visual-menu {
    position: absolute;
    top: 20px;
    right: -10px;
    z-index: 2;
    display: grid;
    grid-template-columns: repeat(6, 35px);
    gap: 6px;
    padding: 10px 17px 16px 11px;
    border: 1px solid #ccc;
    border-top: 0;
    border-radius: 0 0 6px 6px;
    background: #f0f0f0;
    box-shadow: 0 3px 5px rgba(0, 0, 0, 0.3);
}

.visual-menu button {
    display: flex;
    align-items: center;
    justify-content: center;
    height: 34px;
    border: 2px solid #ddd;
    border-radius: 3px;
    background: #fff;
}

.visual-menu .selected {
    border-color: #2a85c4;
}

.visual-menu button svg {
    width: 25px;
    height: 24px;
}

.cursor {
    position: absolute;
    left: 158px;
    top: 87px;
}

/* Page */
.page {
    display: flex;
    flex: 1;
}

.sidebar {
    flex: 0 0 232px;
    padding: 0 13px;
    background: #f7f7f7;
    border-right: 1px solid #f0f0f0;
}

.block {
    border-bottom: 1px solid #e8e8e8;
}

.dataset {
    height: 118px;
    padding-top: 17px;
}

.segments {
    height: 69px;
    padding-top: 22px;
}

.fields {
    padding: 23px 0 21px;
}

.row {
    display: flex;
    justify-content: space-between;
}

.row h3 {
    display: flex;
    align-items: center;
    gap: 10px;
    font-size: 19px;
    line-height: 24px;
}

.tools {
    display: flex;
    gap: 4px;
}

.tools .icon {
    width: 15px;
    height: 15px;
}

.badge {
    min-width: 22px;
    height: 19px;
    border-radius: 10px;
    background: #b5b5b5;
    color: #fff;
    font-size: 12px;
    font-weight: bold;
    line-height: 19px;
    text-align: center;
}

.dataset-name {
    padding: 3px 5px 12px;
}

.sample {
    padding-left: 5px;
    font-size: 13px;
}

.sample button {
    height: 24px;
    padding: 0 5px;
    border: 1px solid #ccc;
    border-radius: 4px;
    background: #fff;
}

.hint {
    padding: 13px 0 9px;
    line-height: 16px;
}

.panel {
    border: 1px solid #ddd;
    background: #fff;
}

.panel + .panel {
    margin-top: 22px;
}

.panel h4 {
    display: flex;
    align-items: center;
    justify-content: space-between;
    height: 28px;
    padding: 0 3px;
    background: #ececec;
    border-bottom: 1px solid #ddd;
}

.panel ul {
    display: flex;
    flex-direction: column;
    gap: 2px;
    padding: 5px 5px 6px;
}

.panel li {
    position: relative;
    display: flex;
    align-items: center;
    gap: 3px;
    height: 22px;
    padding-left: 3px;
    border: 1px solid #ddd;
    border-radius: 3px;
    background: #eee;
    font-size: 12px;
}

.panel li.group {
    border: 0;
    border-radius: 0;
    background: #a9a9a9;
    color: #fff;
    font-weight: bold;
}

.panel li.muted {
    border-color: #f5f5f5;
    background: #fbfbfb;
    color: #aaa;
}

.calculated::after {
    content: "";
    position: absolute;
    top: -1px;
    right: -1px;
    border: 6px solid #08c61a;
    border-left-color: transparent;
    border-bottom-color: transparent;
}

.panel i,
.chip i {
    display: flex;
    align-items: center;
    justify-content: center;
    width: 17px;
    height: 18px;
    border: 1px solid #ccc;
    border-radius: 2px;
    background: #fff;
    font-size: 12px;
    color: #666;
}

.panel .muted i {
    border-color: #eee;
    color: #bbb;
}

.main {
    flex: 1;
    min-width: 0;
    padding: 0 20px 9px 21px;
}

.title {
    display: flex;
    align-items: center;
    gap: 18px;
    height: 61px;
    padding: 10px 10px 0;
    border-bottom: 1px solid #eee;
}

.title h1 {
    font-size: 24px;
    color: #222;
}

.title a {
    display: flex;
    align-items: center;
    gap: 4px;
    padding-top: 6px;
}

.shelves {
    display: flex;
    flex-direction: column;
    gap: 6px;
    padding: 8px 6px 24px 0;
}

.subtitle-edit {
    height: 15px;
    padding-left: 21px;
}

.shelf {
    display: flex;
    gap: 10px;
}

.name {
    display: flex;
    align-items: center;
    justify-content: flex-end;
    gap: 5px;
    width: 100px;
    padding-bottom: 1px;
    color: #666;
}

.name b {
    color: #f08a24;
}

.import {
    display: flex;
    padding: 4px 5px;
    border: 1px solid #ccc;
    border-radius: 3px;
    background: #fff;
    color: #333;
}

.drop {
    display: flex;
    flex: 1;
    align-items: center;
    gap: 4px;
    height: 36px;
    padding: 0 7px 2px;
    border: 1px dashed #bbb;
    background: #f9f9f9;
}

.chip {
    display: flex;
    align-items: center;
    gap: 4px;
    height: 24px;
    padding: 0 10px 0 5px;
    border: 1px solid #d5dfe6;
    border-radius: 3px;
    background: #e4f1fb;
    font-size: 13px;
}

.chip .caret {
    margin-left: 7px;
    color: #2a85c4;
}

.refresh {
    display: flex;
    align-self: flex-start;
    align-items: center;
    gap: 4px;
    height: 32px;
    margin-left: 110px;
    padding: 0 12px;
    border: 1px solid #2476b0;
    border-radius: 3px;
    background: #2a85c4;
    color: #fff;
    font-size: 12px;
    font-weight: bold;
}

/* Map */
.map {
    position: relative;
    overflow: hidden;
    font-family: Roboto, sans-serif;
}

.tiles {
    display: block;
    width: 100%;
}

.forest {
    fill: #cbe6a3;
}

.clearing {
    fill: #eceee4;
}

.water {
    fill: #a3ccff;
}

.streams {
    fill: none;
    stroke: #b5d4fb;
    stroke-width: 1;
}

.border {
    fill: none;
    stroke: #aaa;
    stroke-dasharray: 10 4;
}

.road-edge {
    fill: none;
    stroke: #f3c48c;
    stroke-width: 3;
    stroke-linejoin: round;
}

.road-core {
    stroke: #ffe0b0;
    stroke-width: 1;
}

.coast {
    fill: none;
    stroke: #666;
    stroke-width: 1;
}

.tiles text {
    text-anchor: middle;
    paint-order: stroke;
    stroke: #f8f7f5;
    stroke-width: 2px;
}

.tiles .start {
    text-anchor: start;
}

.tiles .end {
    text-anchor: end;
}

.state {
    font-size: 14px;
    font-weight: 500;
    letter-spacing: 2px;
    fill: #8a8378;
}

.country {
    font-size: 26px;
    font-weight: bold;
    letter-spacing: 2px;
    fill: #222;
}

.park {
    font-size: 13px;
    font-style: italic;
    fill: #6f9a60;
}

.town {
    font-size: 12px;
    fill: #333;
}

.city {
    font-size: 14px;
}

.town circle {
    fill: #fff;
    stroke: #333;
}

.track {
    fill: none;
    stroke: #000;
    stroke-width: 51;
    stroke-linecap: round;
    stroke-linejoin: round;
}

.marker circle {
    fill: #ff9800;
}

.marker text {
    font-family: "Liberation Sans", Arial, sans-serif;
    font-size: 12px;
    text-anchor: start;
    stroke: none;
    fill: #222;
    fill-opacity: 0.75;
}

.zoom {
    position: absolute;
    top: 11px;
    left: 10px;
    display: flex;
    flex-direction: column;
    width: 28px;
    border-radius: 4px;
    background: #fff;
    box-shadow: 0 1px 5px rgba(0, 0, 0, 0.6);
}

.zoom button {
    height: 27px;
    font: bold 18px "Liberation Sans", Arial, sans-serif;
    color: #000;
}

.zoom button + button {
    border-top: 1px solid #ccc;
}

.google {
    position: absolute;
    left: 6px;
    bottom: 3px;
    font-size: 20px;
    font-weight: 500;
    line-height: 24px;
    text-shadow: 0 0 2px #fff;
}

.google .b {
    color: #4285f4;
}

.google .r {
    color: #ea4335;
}

.google .y {
    color: #fbbc05;
}

.google .g {
    color: #34a853;
}

.credits {
    position: absolute;
    right: 0;
    bottom: 0;
    display: flex;
    flex-direction: column;
    align-items: flex-end;
    gap: 4px;
    font-size: 11px;
    color: #444;
}

.leaflet {
    padding: 1px 6px;
    background: rgba(255, 255, 255, 0.7);
    font: 12px/16px "Liberation Sans", Arial, sans-serif;
    color: #0078a8;
}

.terms {
    display: flex;
    gap: 10px;
    padding: 0 6px;
    background: rgba(245, 245, 245, 0.75);
    line-height: 15px;
}

.terms a {
    color: #444;
}

.status {
    position: absolute;
    left: 0;
    bottom: 0;
    width: 586px;
    height: 17px;
    padding-left: 4px;
    border-radius: 0 4px 0 0;
    background: rgba(255, 255, 255, 0.4);
    font-family: Roboto, sans-serif;
    font-size: 12px;
    line-height: 17px;
    color: rgba(120, 120, 120, 0.55);
}
```
